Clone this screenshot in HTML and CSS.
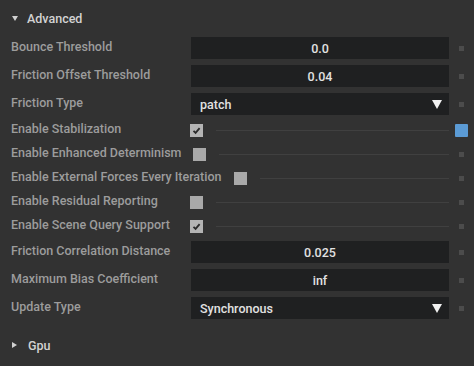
FILE: index.html
```html
<!DOCTYPE html>
<html>
<head>
<meta charset="utf-8">
<link rel="stylesheet" href="styles.css">
</head>
<body>
<div class="panel">
  <div class="section-head open">
    <span class="tri tri-down"></span><span class="head-text">Advanced</span>
  </div>

  <div class="row field-row">
    <div class="label">Bounce Threshold</div>
    <div class="field num">0.0</div>
    <div class="mark"><span class="dot"></span></div>
  </div>
  <div class="row field-row">
    <div class="label">Friction Offset Threshold</div>
    <div class="field num">0.04</div>
    <div class="mark"><span class="dot"></span></div>
  </div>
  <div class="row field-row">
    <div class="label">Friction Type</div>
    <div class="field combo"><span>patch</span><span class="arrow"></span></div>
    <div class="mark"><span class="dot"></span></div>
  </div>

  <div class="row check-row">
    <div class="label">Enable Stabilization</div>
    <div class="check on"><svg viewBox="0 0 13 13" width="13" height="13"><path d="M3.5 6.8 L5.6 8.9 L9.6 4.2" fill="none" stroke="#2a2a2a" stroke-width="1.8"/></svg></div>
    <div class="line"></div>
    <div class="mark"><span class="blue"></span></div>
  </div>
  <div class="row check-row">
    <div class="label">Enable Enhanced Determinism</div>
    <div class="check"></div>
    <div class="line"></div>
    <div class="mark"><span class="dot"></span></div>
  </div>
  <div class="row check-row">
    <div class="label">Enable External Forces Every Iteration</div>
    <div class="check"></div>
    <div class="line"></div>
    <div class="mark"><span class="dot"></span></div>
  </div>
  <div class="row check-row">
    <div class="label">Enable Residual Reporting</div>
    <div class="check"></div>
    <div class="line"></div>
    <div class="mark"><span class="dot"></span></div>
  </div>
  <div class="row check-row">
    <div class="label">Enable Scene Query Support</div>
    <div class="check on"><svg viewBox="0 0 13 13" width="13" height="13"><path d="M3.5 6.8 L5.6 8.9 L9.6 4.2" fill="none" stroke="#2a2a2a" stroke-width="1.8"/></svg></div>
    <div class="line"></div>
    <div class="mark"><span class="dot"></span></div>
  </div>

  <div class="row field-row">
    <div class="label">Friction Correlation Distance</div>
    <div class="field num">0.025</div>
    <div class="mark"><span class="dot"></span></div>
  </div>
  <div class="row field-row">
    <div class="label">Maximum Bias Coefficient</div>
    <div class="field num">inf</div>
    <div class="mark"><span class="dot"></span></div>
  </div>
  <div class="row field-row">
    <div class="label">Update Type</div>
    <div class="field combo"><span>Synchronous</span><span class="arrow"></span></div>
    <div class="mark"><span class="dot"></span></div>
  </div>

  <div class="section-head closed">
    <span class="tri tri-right"></span><span class="head-text">Gpu</span>
  </div>
</div>
</body>
</html>
```

FILE: styles.css
```css
html, body {
  margin: 0;
  padding: 0;
  background: #323232;
}
body {
  width: 474px;
  height: 366px;
  overflow: hidden;
  font-family: Roboto, "Liberation Sans", sans-serif;
  font-weight: 500;
  font-size: 12.5px;
}
.panel {
  display: flex;
  flex-direction: column;
  padding-left: 11px;
}
.section-head {
  display: flex;
  align-items: center;
  color: #d2d2d2;
  font-size: 12.5px;
}
.section-head.open {
  height: 34px;
  padding-top: 2px;
  box-sizing: border-box;
}
.section-head.closed {
  height: 44px;
  padding-top: 2px;
  box-sizing: border-box;
}
.tri {
  width: 0;
  height: 0;
  margin-right: 9px;
}
.tri-down {
  margin-left: 1px;
  border-left: 3.5px solid transparent;
  border-right: 3.5px solid transparent;
  border-top: 5px solid #d0d0d0;
}
.tri-right {
  margin-left: 1px;
  margin-right: 11px;
  border-top: 3.5px solid transparent;
  border-bottom: 3.5px solid transparent;
  border-left: 5px solid #d0d0d0;
}
.row {
  display: flex;
  align-items: center;
}
.field-row { height: 28px; }
.check-row { height: 24px; }
.label {
  color: #9c9c9c;
  flex-shrink: 0;
  min-width: 179px;
  padding-right: 12px;
  padding-bottom: 3px;
  box-sizing: border-box;
  white-space: nowrap;
}
.field-row .label {
  min-width: 180px;
  padding-right: 0;
}
.field {
  width: 258px;
  height: 22px;
  background: #1f2021;
  color: #e2e2e2;
  display: flex;
  align-items: center;
  box-sizing: border-box;
}
.field.num {
  justify-content: center;
}
.field.combo {
  justify-content: space-between;
  padding: 0 7px 0 9px;
}
.arrow {
  width: 0;
  height: 0;
  border-left: 5px solid transparent;
  border-right: 5px solid transparent;
  border-top: 9px solid #f2f2f2;
}
.mark {
  width: 25px;
  height: 14px;
  flex-shrink: 0;
  display: flex;
  align-items: center;
  justify-content: center;
}
.dot {
  width: 5px;
  height: 5px;
  background: #4c4c4c;
}
.blue {
  width: 13px;
  height: 13px;
  background: #5b9bd5;
  border-radius: 1px;
}
.check {
  width: 13px;
  height: 13px;
  background: #a9a9a9;
  flex-shrink: 0;
}
.check.on {
  background: #b4b4b4;
}
.check svg { display: block; }
.line {
  flex: 1;
  height: 1px;
  background: #404040;
  margin-left: 13px;
}
```
